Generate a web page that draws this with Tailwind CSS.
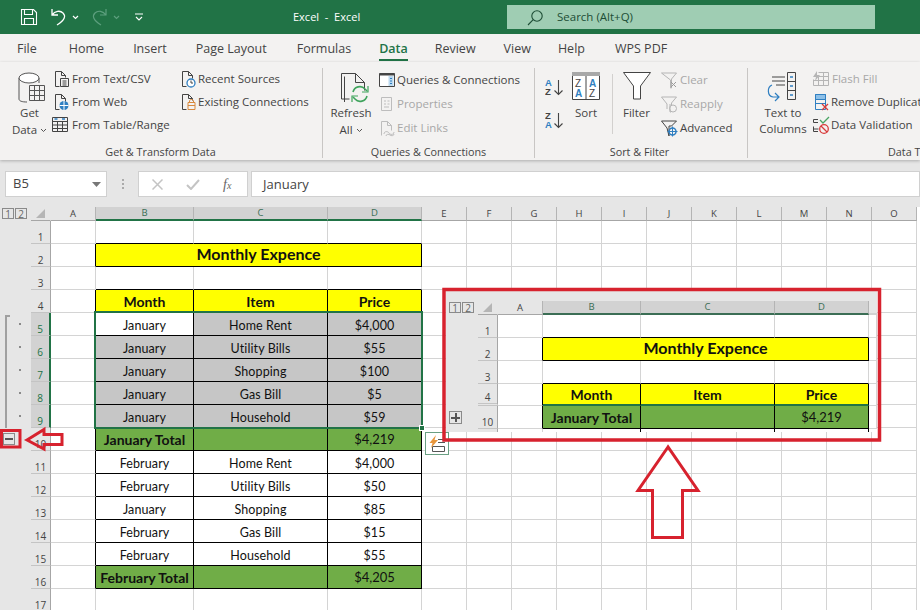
<!DOCTYPE html>
<html lang="en">
<head>
    <meta charset="UTF-8">
    <title>Excel - Excel</title>
    <script src="https://cdn.jsdelivr.net/npm/@tailwindcss/browser@4"></script>
</head>
<body class="relative w-[920px] h-[614px] overflow-hidden bg-white font-['Open_Sans',sans-serif] text-[12px] text-[#444]">

    <!-- title bar -->
    <div class="flex items-center h-[34px] bg-[#217346] text-white">
        <svg class="ml-[20px]" width="18" height="18" viewBox="0 0 18 18" fill="none" stroke="#fff" stroke-width="1.1"><path d="M1.5 1.5h12l3 3v12h-15z"/><path d="M4.5 1.5v5h8v-5M4.5 16.5v-6h9v6"/></svg>
        <svg class="ml-[12px]" width="18" height="18" viewBox="0 0 18 18" fill="none" stroke="#fff" stroke-width="1.3"><path d="M2 1v6h6M2 7c3-4 8-5 11-2s2 7-6 12"/></svg>
        <svg class="ml-[4px]" width="7" height="5" viewBox="0 0 7 5" fill="none" stroke="#fff" stroke-width="1.2"><path d="M1 1l2.5 2.5L6 1"/></svg>
        <svg class="ml-[11px]" width="18" height="18" viewBox="0 0 18 18" fill="none" stroke="#5d9f7e" stroke-width="1.2"><path d="M16 1v6h-6M16 7c-3-4-8-5-11-2s-2 7 6 12"/></svg>
        <svg class="ml-[5px]" width="7" height="5" viewBox="0 0 7 5" fill="none" stroke="#5d9f7e" stroke-width="1.2"><path d="M1 1l2.5 2.5L6 1"/></svg>
        <svg class="ml-[15px]" width="8" height="8" viewBox="0 0 8 8" fill="none" stroke="#fff" stroke-width="1.1"><path d="M0 1h8M1 4l3 3 3-3"/></svg>
        <span class="ml-[150px] w-[214px] pb-[2px] leading-none text-[11px]">Excel&nbsp; -&nbsp; Excel</span>
        <div class="flex items-center w-[368px] h-[24px] bg-[#9fcdb3] text-[#1d4d35]">
            <svg class="ml-[20px]" width="17" height="17" viewBox="0 0 17 17" fill="none" stroke="#1d4d35" stroke-width="1.1"><circle cx="10" cy="7" r="5.2"/><path d="M6.2 10.6L1 16"/></svg>
            <span class="ml-[13px] text-[11.500px]">Search (Alt+Q)</span>
        </div>
    </div>

    <!-- tabs -->
    <div class="flex items-center gap-[29px] h-[28px] pl-[17px] pt-[3px] bg-[#f3f2f1] text-[12.5px] text-[#444]">
        <span class="mr-[3px]">File</span><span>Home</span><span>Insert</span><span>Page Layout</span><span class="ml-[1px]">Formulas</span>
        <span class="relative -ml-[1px] font-semibold text-[#217346]">Data<span class="absolute left-0 right-0 top-[19px] h-[2px] bg-[#217346]"></span></span>
        <span class="-ml-[2px]">Review</span><span class="-ml-[1px]">View</span><span class="-ml-[2px]">Help</span><span class="ml-[1px]">WPS PDF</span>
    </div>

    <!-- ribbon -->
    <div class="flex h-[98px] pt-[6px] bg-[#f3f2f1] shadow-[0_1px_3px_rgba(0,0,0,0.25)] relative z-10 whitespace-nowrap text-[11.500px]">

        <!-- get & transform -->
        <section class="flex flex-col shrink-0 w-[323px] h-[90px] border-r border-[#c8c6c4]">
            <div class="flex h-[78px]">
                <div class="flex flex-col items-center w-[53px] pt-[4px] pl-[6px] leading-[16px]">
                    <svg class="ml-[4px]" width="28" height="33" viewBox="0 0 28 33" fill="none"><path d="M1 6v21c0 2 3 3 8 3" stroke="#555"/><path d="M21 6v5" stroke="#555"/><ellipse cx="11" cy="6" rx="10" ry="5" fill="#fff" stroke="#555"/><path d="M11.500 13.500h15v15h-15zM11.500 18.500h15M11.500 23.500h15M16.500 13.500v15M21.500 13.500v15" fill="#f3f2f1" stroke="#555"/></svg>
                    <span>Get</span>
                    <span class="mt-[1px] flex items-center gap-[3px]">Data<svg width="7" height="5" viewBox="0 0 7 5" fill="none" stroke="#555"><path d="M1 1l2.500 2.500L6 1"/></svg></span>
                </div>
                <div class="flex flex-col w-[128px] -mt-[1px]">
                    <div class="flex items-center gap-[2px] h-[23px]">
                        <svg width="17" height="18" viewBox="0 0 17 18" fill="none" stroke="#444"><path d="M2.500 16.500v-15h6l4 4v2M8.500 1.500v4h4M2.500 16.500h4"/><path d="M7.500 8.500h8v8h-8zM9.500 11h4M9.500 13h4M9.500 15h4"/></svg>
                        <span>From Text/CSV</span>
                    </div>
                    <div class="flex items-center gap-[2px] h-[23px]">
                        <svg width="17" height="18" viewBox="0 0 17 18" fill="none"><path d="M2.500 16.500v-15h6l4 4v3M8.500 1.500v4h4M2.500 16.500h4" stroke="#444"/><circle cx="11" cy="12.500" r="4.500" fill="#2f7fc1"/><path d="M6.500 12.500h9M11 8v9" stroke="#fff" stroke-width="1"/></svg>
                        <span>From Web</span>
                    </div>
                    <div class="flex items-center gap-[2px] -ml-[2px] h-[23px]">
                        <svg width="19" height="17" viewBox="0 0 19 17" fill="none" stroke="#444"><path d="M1.500 1.500h15v14h-15zM1.500 5.500h15M1.500 9h15M1.500 12.500h15M6.500 5.500v10M11.500 5.500v10"/><path d="M3.500 3h3M11 3h3" stroke="#2f7fc1" stroke-width="1.500"/></svg>
                        <span>From Table/Range</span>
                    </div>
                </div>
                <div class="flex flex-col -mt-[1px]">
                    <div class="flex items-center gap-[2px] h-[23px]">
                        <svg width="15" height="18" viewBox="0 0 15 18" fill="none"><path d="M1.500 16.500v-15h6l4 4v3M7.500 1.500v4h4M1.500 16.500h4" stroke="#444"/><circle cx="10" cy="13" r="4" fill="#fff" stroke="#2f7fc1" stroke-width="1.300"/><path d="M10 10.500V13h2" stroke="#444"/></svg>
                        <span>Recent Sources</span>
                    </div>
                    <div class="flex items-center gap-[2px] h-[23px]">
                        <svg width="15" height="18" viewBox="0 0 15 18" fill="none"><path d="M1.500 16.500v-15h6l4 4v2M7.500 1.500v4h4M1.500 16.500h4" stroke="#444"/><path d="M7 9.500h7v7H7zM8.500 9.500V8c0-2 4-2 4 0v1.500M7 12.500h7" stroke="#d8893d"/></svg>
                        <span>Existing Connections</span>
                    </div>
                </div>
            </div>
            <div class="text-center leading-[12px] text-[10.800px] pr-[1px]">Get &amp; Transform Data</div>
        </section>

        <!-- queries -->
        <section class="flex flex-col shrink-0 w-[212px] h-[90px] border-r border-[#c8c6c4]">
            <div class="flex h-[78px]">
                <div class="flex flex-col items-center w-[56px] pt-[4px] leading-[16px]">
                    <svg class="ml-[10px]" width="32" height="33" viewBox="0 0 32 33" fill="none"><path d="M1.500 27V1.500h14l9 9v8M15.500 1.500v9h9M1.500 27h8" stroke="#444"/><path d="M4.500 30V4.500" stroke="#444"/><path d="M13 20a7 7 0 0 1 12-3l2 2M27 24a7 7 0 0 1-12 3l-2-2" stroke="#3fa35c" stroke-width="1.600"/><path d="M28 14v6h-6M12 30v-6h6" stroke="#3fa35c" stroke-width="1.200"/></svg>
                    <span>Refresh</span>
                    <span class="mt-[1px] flex items-center gap-[3px]">All<svg width="7" height="5" viewBox="0 0 7 5" fill="none" stroke="#555"><path d="M1 1l2.500 2.500L6 1"/></svg></span>
                </div>
                <div class="flex flex-col">
                    <div class="flex items-center gap-[2px] h-[24px]">
                        <svg width="16" height="14" viewBox="0 0 16 14" fill="none"><path d="M.500 .500h15v13H.500z" fill="#fff" stroke="#444"/><path d="M.500 .500h15v2H.500z" fill="#444"/><path d="M9.500 3h5v10h-5z" fill="#bcd9ef"/><path d="M11 5.500h2M11 8h2M11 10.500h2" stroke="#2f7fc1"/></svg>
                        <span>Queries &amp; Connections</span>
                    </div>
                    <div class="flex items-center gap-[3px] h-[24px] text-[#a8a8a8]">
                        <svg width="15" height="16" viewBox="0 0 15 16" fill="none" stroke="#bdbdbd"><path d="M2.500 1.500h10v13h-10zM5 5h2M5 8h2M8.500 5h2M8.500 8h2M5 11h5"/></svg>
                        <span>Properties</span>
                    </div>
                    <div class="flex items-center gap-[2px] h-[24px] text-[#a8a8a8]">
                        <svg width="16" height="17" viewBox="0 0 16 17" fill="none" stroke="#bdbdbd"><path d="M2.500 15.500v-14h6l4 4v5M8.500 1.500v4h4"/><path d="M5 14c0-3 4-3 5-1s5 2 5-1M7 16c0-2 3-2 4-1s4 1 4-1"/></svg>
                        <span>Edit Links</span>
                    </div>
                </div>
            </div>
            <div class="text-center leading-[12px] text-[10.800px]">Queries &amp; Connections</div>
        </section>

        <!-- sort & filter -->
        <section class="flex flex-col shrink-0 w-[213px] h-[90px] border-r border-[#c8c6c4]">
            <div class="flex h-[78px]">
                <div class="flex flex-col w-[37px] pl-[10px] pt-[9px] gap-[12px]">
                    <svg width="20" height="21" viewBox="0 0 20 21" fill="none"><text x="0" y="9" font-size="9.500" font-weight="700" fill="#2f7fc1" font-family="Liberation Sans">A</text><text x="0" y="18" font-size="9.500" font-weight="700" fill="#444" font-family="Liberation Sans">Z</text><path d="M13.500 3v14M9.500 13.500l4 4 4-4" stroke="#444" stroke-width="1.100"/></svg>
                    <svg width="20" height="21" viewBox="0 0 20 21" fill="none"><text x="0" y="9" font-size="9.500" font-weight="700" fill="#444" font-family="Liberation Sans">Z</text><text x="0" y="18" font-size="9.500" font-weight="700" fill="#2f7fc1" font-family="Liberation Sans">A</text><path d="M13.500 3v14M9.500 13.500l4 4 4-4" stroke="#444" stroke-width="1.100"/></svg>
                </div>
                <div class="flex flex-col items-center w-[28px] pt-[4px] leading-[16px]">
                    <svg width="28" height="28" viewBox="0 0 28 28" fill="none"><path d="M.500 .500h27v27H.500z" fill="#fff" stroke="#444"/><path d="M0 0h28v4H0z" fill="#a8a8a8"/><path d="M14 4v24" stroke="#444"/><text x="3" y="15" font-size="10" fill="#444" font-family="Liberation Sans">Z</text><text x="3" y="25" font-size="10" font-weight="700" fill="#2f7fc1" font-family="Liberation Sans">A</text><text x="17" y="15" font-size="10" font-weight="700" fill="#2f7fc1" font-family="Liberation Sans">A</text><text x="17" y="25" font-size="10" fill="#444" font-family="Liberation Sans">Z</text></svg>
                    <span class="mt-[5px]">Sort</span>
                </div>
                <div class="w-[1px] h-[60px] mt-[6px] ml-[12px] bg-[#d2d0ce]"></div>
                <div class="flex flex-col items-center w-[48px] pt-[4px] pr-[1px] leading-[16px]">
                    <svg width="28" height="28" viewBox="0 0 28 28" fill="none" stroke="#444"><path d="M.500 .500h27L17.500 14v13h-7V14z" fill="#fff"/></svg>
                    <span class="mt-[5px]">Filter</span>
                </div>
                <div class="flex flex-col">
                    <div class="flex items-center gap-[2px] h-[24px] text-[#a8a8a8]">
                        <svg width="17" height="17" viewBox="0 0 17 17" fill="none" stroke="#b5b5b5"><path d="M.500 1h15l-5 6v9h-1V8z"/><path d="M10 10l5 5M15 10l-5 5" stroke="#9a9a9a"/></svg>
                        <span>Clear</span>
                    </div>
                    <div class="flex items-center gap-[2px] h-[24px] text-[#a8a8a8]">
                        <svg width="17" height="17" viewBox="0 0 17 17" fill="none" stroke="#b5b5b5"><path d="M.500 1h15l-5 6v3M9 8v8h1M.500 1L6 8v5"/><circle cx="12" cy="12.500" r="3.500"/></svg>
                        <span>Reapply</span>
                    </div>
                    <div class="flex items-center gap-[2px] h-[24px]">
                        <svg width="17" height="17" viewBox="0 0 17 17" fill="none"><path d="M.500 1h15l-5 5H8v10L6 8z" stroke="#444"/><circle cx="11.500" cy="11.500" r="3.500" stroke="#2f7fc1" stroke-width="1.500"/><path d="M11.500 6.500v10M6.500 11.500h10" stroke="#2f7fc1"/></svg>
                        <span>Advanced</span>
                    </div>
                </div>
            </div>
            <div class="text-center leading-[12px] text-[10.800px] pr-[3px]">Sort &amp; Filter</div>
        </section>

        <!-- data tools, cut off by the window -->
        <section class="flex flex-col shrink-0 h-[90px]">
            <div class="flex h-[78px]">
                <div class="flex flex-col items-center w-[64px] pl-[6px] pt-[4px] leading-[16px]">
                    <svg width="34" height="30" viewBox="0 0 34 30" fill="none"><path d="M6 5h13M6 9h13M10 13h9" stroke="#444"/><path d="M21.500 .500h8v27h-8zM21.500 9.500h8M21.500 18.500h8" stroke="#444"/><path d="M24 5h3M24 14h3M24 23h3" stroke="#2f7fc1" stroke-width="1.500"/><path d="M6 13c-5 2-5 11 1 12l6 0M9 21l4 4-4 4" stroke="#2f7fc1" stroke-width="1.200"/></svg>
                    <span class="mt-[3px]">Text to</span>
                    <span>Columns</span>
                </div>
                <div class="flex flex-col -mt-[1px]">
                    <div class="flex items-center gap-[2px] h-[23px] text-[#a8a8a8]">
                        <svg width="18" height="16" viewBox="0 0 18 16" fill="none" stroke="#b5b5b5"><path d="M6.500 1.500h10v13h-15v-6M6.500 5.500h10M1.500 9.500h15M6.500 5.500v9M11.500 1.500v13"/><path d="M5 0L1 6h3l-1 4 5-6H5z" fill="#b5b5b5" stroke="none"/></svg>
                        <span>Flash Fill</span>
                    </div>
                    <div class="flex items-center gap-[1px] h-[23px]">
                        <svg width="18" height="18" viewBox="0 0 18 18" fill="none"><path d="M3.500 1.500h10v15h-10z" stroke="#2f7fc1"/><path d="M3.500 1.500h10v5h-10z" fill="#8dc0e8" stroke="#2f7fc1"/><path d="M3.500 10.500h10" stroke="#2f7fc1"/><path d="M10 11l6 6M16 11l-6 6" stroke="#d83b3b" stroke-width="1.300"/></svg>
                        <span>Remove Duplicates</span>
                    </div>
                    <div class="flex items-center gap-[1px] h-[23px]">
                        <svg width="18" height="18" viewBox="0 0 18 18" fill="none"><path d="M6 3.500H1.500v3H6M1.500 10.500v5H6M1.500 13h5" stroke="#444"/><path d="M8 4l3 3 6-6" stroke="#4aa564" stroke-width="1.300"/><circle cx="12" cy="13" r="4.300" stroke="#d83b3b" stroke-width="1.300"/><path d="M9 10l6 6" stroke="#d83b3b" stroke-width="1.300"/></svg>
                        <span>Data Validation</span>
                    </div>
                </div>
            </div>
            <div class="leading-[12px] text-[10.800px] pl-[140px]">Data Tools</div>
        </section>
    </div>

    <!-- formula bar -->
    <div class="flex items-start h-[47px] pt-[11px] pl-[5px] bg-[#e6e6e6]">
        <div class="flex items-center justify-between w-[102px] h-[26px] pl-[7px] pr-[5px] bg-white border border-[#d0d0d0] text-[13px]">
            B5
            <svg width="9" height="5" viewBox="0 0 9 5" fill="#777"><path d="M0 0h9L4.500 5z"/></svg>
        </div>
        <div class="flex flex-col gap-[2px] w-[2px] ml-[15px] mt-[8px] mr-[14px]">
            <i class="block w-[2px] h-[2px] bg-[#aaa]"></i><i class="block w-[2px] h-[2px] bg-[#aaa]"></i><i class="block w-[2px] h-[2px] bg-[#aaa]"></i>
        </div>
        <div class="flex items-center w-[110px] h-[26px] bg-white border border-[#d0d0d0]">
            <svg class="ml-[13px]" width="11" height="11" viewBox="0 0 11 11" stroke="#c4c4c4" stroke-width="1.500"><path d="M.500 .500l10 10M10.500 .500l-10 10"/></svg>
            <svg class="ml-[23px]" width="14" height="11" viewBox="0 0 14 11" fill="none" stroke="#c4c4c4" stroke-width="2"><path d="M1 6l4 4 8-9"/></svg>
            <span class="ml-[23px] font-['Liberation_Serif',serif] italic text-[14px] text-[#666]">f<span class="text-[10px]">x</span></span>
        </div>
        <div class="flex items-center flex-1 h-[26px] ml-[3px] pl-[11px] pt-[1px] bg-white border border-[#d0d0d0] text-[13px]">January</div>
    </div>

    <!-- worksheet -->
    <div class="relative h-[403px] overflow-hidden">
        <div id="sheet" class="grid grid-cols-[31px_20px_45px_98px_134px_94px_repeat(11,45px)] grid-rows-[14px] auto-rows-[23px]"></div>

        <!-- selection B5:D9 -->
        <div class="absolute left-[94px] top-[104px] w-[329px] h-[118px] border-2 border-[#217346]"></div>
        <div class="absolute left-[419px] top-[218px] w-[6px] h-[6px] bg-[#217346] border border-white"></div>

        <!-- outline bracket -->
        <div class="absolute left-[5px] top-[108px] w-[5px] h-[113px] border-l-2 border-t-2 border-[#a0a0a0]"></div>

        <!-- quick analysis -->
        <div class="absolute left-[425px] top-[225px] flex items-center justify-center w-[24px] h-[23px] bg-white border border-[#6a9f83]">
            <svg width="18" height="18" viewBox="0 0 18 18" fill="none"><path d="M10 4.500h7M10 7.500h7M4.500 11.500h12v5h-12z" stroke="#555"/><path d="M8 0L1.500 8h3L3 13l7-8H6.500z" fill="#e8963c"/></svg>
        </div>
    </div>

    <!-- pasted picture of the collapsed sheet -->
    <div id="inset" class="absolute left-[446px] top-[291px] grid grid-cols-[32px_20px_45px_98px_134px_94px_8px] grid-rows-[10px_14px_23px_23px_23px_22px_23px_3px] w-[431px] bg-white overflow-hidden"></div>

    <!-- red annotations -->
    <svg class="absolute left-0 top-0 pointer-events-none" width="920" height="614" viewBox="0 0 920 614" fill="none" stroke="#d7222e">
        <path d="M444 289.500H879.500V440H444z" stroke-width="3.500"/>
        <path d="M668 447L638 490.500H652.500V537.500H682.500V490.500H698z" stroke-width="3"/>
        <path d="M1.500 430.500H20V447H1.500z" stroke-width="3"/>
        <path d="M27 440L44 429.500V434.500H62V444.500H44V449z" stroke-width="3"/>
    </svg>

    <script>
        // cell styles
        const grid = 'border-r border-b border-[#d4d4d4]';
        const cell = "flex items-center justify-center border-r border-b border-black font-['Lato',sans-serif] text-[#111] overflow-hidden whitespace-nowrap ";
        const kinds = {
            yellow: 'bg-[#ffff00] font-bold text-[14px]',
            title: 'bg-[#ffff00] font-bold text-[16px] col-span-3 pb-[2px]',
            plain: 'bg-white text-[12.500px] pt-[4px] tracking-[0.1px]',
            sel: 'bg-[#c6c6c6] text-[12.500px] pt-[4px] tracking-[0.1px]',
            total: 'bg-[#70ad47] text-[13px] pt-[2px]',
            totalBold: 'bg-[#70ad47] font-bold text-[14px]'
        };

        const rowHead = 'flex items-end justify-center pb-[1px] text-[10px] leading-none bg-[#e6e6e6] border-r border-r-[#a6a6a6] border-b border-b-[#c4c4c4] text-[#444]';
        const rowHeadSel = 'flex items-end justify-center pb-[1px] text-[10px] leading-none bg-[#d2d2d2] border-r-2 border-r-[#217346] border-b border-b-[#c4c4c4] text-[#217346]';
        const colHead = 'flex items-center justify-center text-[9.500px] leading-none bg-[#e6e6e6] border-r border-r-[#b4b4b4] border-b border-b-[#a6a6a6] text-[#444]';
        const colHeadSel = 'flex items-center justify-center text-[9.500px] leading-none bg-[#d2d2d2] border-r border-r-[#b4b4b4] border-b-2 border-b-[#217346] text-[#3b6e55]';

        const sheetRows = [
            [1], [2, 'title', 'Monthly Expence'], [3], [4, 'yellow', 'Month', 'Item', 'Price'],
            [5, 'sel', 'January', 'Home Rent', '$4,000'],
            [6, 'sel', 'January', 'Utility Bills', '$55'],
            [7, 'sel', 'January', 'Shopping', '$100'],
            [8, 'sel', 'January', 'Gas Bill', '$5'],
            [9, 'sel', 'January', 'Household', '$59'],
            [10, 'total', 'January Total', '', '$4,219'],
            [11, 'plain', 'February', 'Home Rent', '$4,000'],
            [12, 'plain', 'February', 'Utility Bills', '$50'],
            [13, 'plain', 'January', 'Shopping', '$85'],
            [14, 'plain', 'February', 'Gas Bill', '$15'],
            [15, 'plain', 'February', 'Household', '$55'],
            [16, 'total', 'February Total', '', '$4,205'],
            [17]
        ];
        const insetRows = [
            [1], [2, 'title', 'Monthly Expence'], [3], [4, 'yellow', 'Month', 'Item', 'Price'],
            [10, 'total', 'January Total', '', '$4,219']
        ];

        function add(parent, cls, text) {
            const d = document.createElement('div');
            d.className = cls;
            if (text) d.textContent = text;
            parent.appendChild(d);
            return d;
        }

        function levelButtons(parent, left) {
            const g = add(parent, 'flex items-start gap-[1px] pt-[1px] bg-[#e6e6e6] ' + left);
            ['1', '2'].forEach(n => add(g, 'flex items-center justify-center w-[12px] h-[11px] border border-[#8a8a8a] text-[10px] leading-none text-[#666]', n));
        }

        function buildRows(el, rows, rest, gutter, isSel) {
            rows.forEach(r => {
                const n = r[0], kind = r[1];
                const collapsedEdge = el.id === 'inset' && n === 4;
                gutter(el, n);
                add(el, (isSel(n) ? rowHeadSel : rowHead) + (collapsedEdge ? ' border-double border-b-[3px]' : ''), String(n));
                // column A carries the left edge of the table
                add(el, kind ? 'border-r border-black border-b border-b-[#d4d4d4]' : grid);
                if (!kind) {
                    const next = rows.find(x => x[0] > n);
                    const edge = next && next[1] ? 'border-r border-r-[#d4d4d4] border-b border-b-black' : grid;
                    for (let i = 0; i < 3; i++) add(el, edge);
                } else if (kind === 'title') {
                    add(el, cell + kinds.title, r[2]);
                } else {
                    [2, 3, 4].forEach(i => {
                        let k = kinds[kind];
                        if (kind === 'sel' && n === 5 && i === 2 && el.id === 'sheet') k = kinds.plain;
                        if (kind === 'total' && i === 2) k = kinds.totalBold;
                        // green line where rows 5-9 are hidden
                        if (collapsedEdge) k += ' border-b-2 border-b-[#217346]';
                        add(el, cell + k, r[i]);
                    });
                }
                for (let i = 0; i < rest; i++) add(el, grid);
            });
        }

        // main sheet
        const sheet = document.getElementById('sheet');
        levelButtons(sheet, 'pl-[2px]');
        add(sheet, colHead + ' !border-r-[#e6e6e6]').innerHTML = '<svg width="9" height="9" viewBox="0 0 9 9" fill="#b5b5b5"><path d="M9 0v9H0z"/></svg>';
        'ABCDEFGHIJKLMNO'.split('').forEach(c => add(sheet, 'BCD'.includes(c) ? colHeadSel : colHead, c));
        buildRows(sheet, sheetRows, 11, (el, n) => {
            const g = add(el, 'bg-[#e6e6e6] pl-[19px] pt-[10px]');
            if (n >= 5 && n <= 9) add(g, 'w-[2px] h-[2px] bg-[#8a8a8a]');
            if (n === 10) {
                g.className = 'bg-[#e6e6e6] pl-[3px] pt-[5px]';
                const b = add(g, 'flex items-center justify-center w-[12px] h-[12px] border border-[#8a8a8a]');
                add(b, 'w-[8px] h-[2px] bg-[#555]');
            }
        }, n => n >= 5 && n <= 9);

        // inset picture, same sheet with rows 5-9 collapsed
        const inset = document.getElementById('inset');
        add(inset, 'col-span-full bg-[#e6e6e6]');
        levelButtons(inset, 'pl-[3px]');
        add(inset, colHead + ' !border-r-[#e6e6e6]').innerHTML = '<svg width="9" height="9" viewBox="0 0 9 9" fill="#b5b5b5"><path d="M9 0v9H0z"/></svg>';
        'ABCD'.split('').forEach(c => add(inset, c === 'A' ? colHead : 'flex items-center justify-center text-[9.500px] leading-none bg-[#d2d2d2] border-r border-r-[#b4b4b4] border-b-2 border-b-[#3b6e55] text-[#3b6e55]', c));
        add(inset, 'bg-[#e6e6e6] border-b-2 border-b-[#d2d2d2]');
        buildRows(inset, insetRows, 1, (el, n) => {
            const g = add(el, 'bg-[#e6e6e6] pl-[3px] pt-[5px]');
            if (n === 10) {
                const b = add(g, 'relative flex items-center justify-center w-[13px] h-[13px] border border-[#8a8a8a]');
                add(b, 'w-[9px] h-[2px] bg-[#555]');
                add(b, 'absolute w-[2px] h-[9px] bg-[#555]');
            }
        }, () => false);
        // stubs of the next row at the crop edge
        add(inset, 'bg-[#e6e6e6]');
        add(inset, 'bg-[#e6e6e6] border-r border-[#a6a6a6]');
        add(inset, 'border-r border-[#d4d4d4]');
        add(inset, 'border-r border-black');
        add(inset, 'border-r border-black');
        add(inset, 'border-r border-black');
    </script>
</body>
</html>
